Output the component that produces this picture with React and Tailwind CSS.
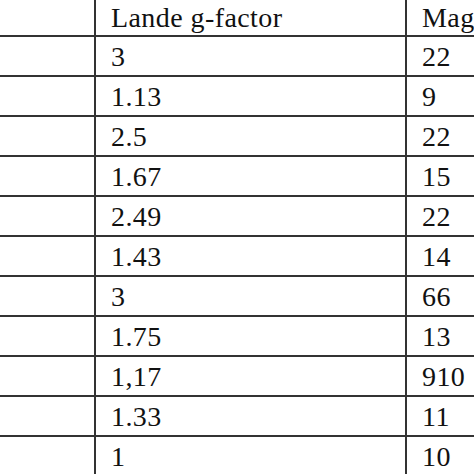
import React from "react";

const rows = [
  ["3", "22"],
  ["1.13", "9"],
  ["2.5", "22"],
  ["1.67", "15"],
  ["2.49", "22"],
  ["1.43", "14"],
  ["3", "66"],
  ["1.75", "13"],
  ["1,17", "910"],
  ["1.33", "11"],
  ["1", "10"],
];

function Row({ cells, header }) {
  return (
    <div
      className={`flex border-b-2 border-[#333] ${
        header ? "h-[39px]" : "h-[40px]"
      }`}
    >
      <div className="w-[96px] shrink-0 border-r-2 border-[#333]" />
      <div className="w-[311px] shrink-0 border-r-2 border-[#333] flex items-center pl-[15px] pt-[2px]">
        {cells[0]}
      </div>
      <div className="flex-1 flex items-center pl-[15px] pt-[2px] whitespace-nowrap overflow-hidden">
        {cells[1]}
      </div>
    </div>
  );
}

export default function App() {
  return (
    <div
      className="w-[474px] h-[474px] overflow-hidden bg-white text-[#111] text-[28px] tracking-[0.015em]"
      style={{ fontFamily: '"Liberation Serif", "Times New Roman", serif' }}
    >
      <div className="-mt-[2px]">
        <Row header cells={["Lande g-factor", "Magnetic moment"]} />
        {rows.map((r, i) => (
          <Row key={i} cells={r} />
        ))}
      </div>
    </div>
  );
}
